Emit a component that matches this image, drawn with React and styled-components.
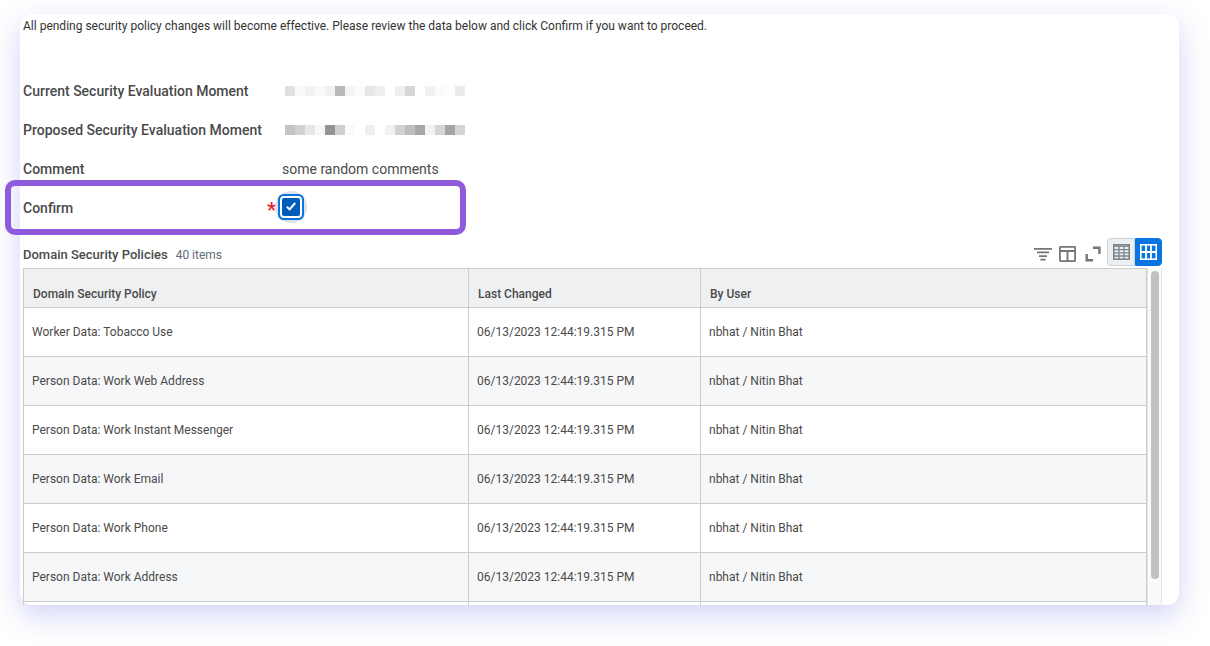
import React, { useState } from 'react';
import styled, { createGlobalStyle } from 'styled-components';

const GlobalStyle = createGlobalStyle`
	* {
		box-sizing: border-box;
	}

	body {
		margin: 0;
		background-color: #ffffff;
		color: #4a4a4a;
		font-family: Roboto, "Liberation Sans", sans-serif;
		font-size: 12px;
	}
`;

const Card = styled.main`
	margin: 14px 31px 41px 20px;
	padding: 0 17px 0 3px;
	border-radius: 12px;
	background-color: #ffffff;
	box-shadow: 0 10px 30px rgba(84, 88, 220, 0.27);
`;

const Intro = styled.p`
	margin: 0 0 33px;
	line-height: 24px;
	color: #333333;
`;

const FieldRow = styled.div`
	position: relative;
	display: flex;
	align-items: center;
	height: 39px;
	font-size: 14px;
`;

const FieldLabel = styled.label`
	display: flex;
	align-items: center;
	justify-content: space-between;
	width: 259px;
	padding-right: 6px;
	flex-shrink: 0;
	font-weight: 500;
	white-space: nowrap;
`;

const Required = styled.span`
	color: #e8232a;
	font-size: 20px;
	font-weight: 700;
	line-height: 20px;
	height: 16px;
`;

const Highlight = styled.div`
	position: absolute;
	top: -8px;
	left: -18px;
	width: 461px;
	height: 55px;
	border: 6px solid #8d5bdb;
	border-radius: 10px;
	pointer-events: none;
`;

const Redacted = styled.div`
	display: flex;
	margin-left: 3px;
`;

const RedactedCell = styled.span`
	width: 10px;
	height: 10px;
	background-color: ${({ $shade }) => $shade};
`;

const CheckHalo = styled.span`
	position: relative;
	display: flex;
	align-items: center;
	justify-content: center;
	width: 32px;
	height: 32px;
	margin: 0 0 2px -7px;
	border-radius: 50%;
	background-color: #dfe2e6;

	& svg {
		position: absolute;
		pointer-events: none;
	}
`;

const CheckInput = styled.input`
	appearance: none;
	width: 18px;
	height: 18px;
	margin: 0;
	border-radius: 2px;
	background-color: #ffffff;
	box-shadow: 0 0 0 2px #ffffff, 0 0 0 4px #0875e1;

	&:checked {
		background-color: #005cb9;
	}
`;

const Toolbar = styled.div`
	display: flex;
	align-items: flex-end;
	justify-content: space-between;
	height: 41px;
	padding-bottom: 2px;
`;

const TableTitle = styled.h2`
	margin: 0;
	font-size: 13px;
	font-weight: 500;
	line-height: 22px;

	& span {
		margin-left: 8px;
		font-size: 12px;
		font-weight: 400;
		color: #5e6a75;
	}
`;

const Tools = styled.div`
	display: flex;
	align-items: center;
`;

const IconButton = styled.button`
	display: flex;
	align-items: center;
	justify-content: center;
	width: 25px;
	height: 24px;
	margin-top: 4px;
	padding: 0;
	border: 0;
	background: none;
	color: #757575;
`;

const ViewToggle = styled.div`
	display: flex;
	margin-left: 2px;
`;

const ToggleButton = styled.button`
	display: flex;
	align-items: center;
	justify-content: center;
	width: ${({ $active }) => ($active ? '27px' : '28px')};
	height: 28px;
	padding: 0;
	border: 1px solid ${({ $active }) => ($active ? '#0875e1' : '#ced3d9')};
	background-color: ${({ $active }) => ($active ? '#0875e1' : '#eeeff1')};
	color: ${({ $active }) => ($active ? '#ffffff' : '#7b858f')};

	&:first-child {
		border-radius: 4px 0 0 4px;
	}

	&:last-child {
		border-radius: 0 4px 4px 0;
	}
`;

const TablePane = styled.div`
	display: flex;
	height: 337px;
	overflow: hidden;
`;

const PolicyTable = styled.table`
	flex: 1;
	height: max-content;
	border-collapse: separate;
	border-spacing: 0;
	border-top: 1px solid #cccccc;
	border-left: 1px solid #cccccc;
	table-layout: fixed;
`;

const HeadCell = styled.th`
	width: ${({ $width }) => $width};
	height: 39px;
	padding: 12px 9px 0;
	border-right: 1px solid #cccccc;
	border-bottom: 1px solid #cccccc;
	background-color: #eff0f2;
	font-weight: 500;
	text-align: left;
`;

const BodyRow = styled.tr`
	&:nth-child(even) {
		background-color: #f6f7f8;
	}
`;

const BodyCell = styled.td`
	height: 49px;
	padding: 0 8px;
	border-right: 1px solid #cccccc;
	border-bottom: 1px solid #cccccc;
`;

const ScrollTrack = styled.div`
	width: 15px;
	padding: 3px 0 0 3px;
	border-left: 1px solid #e4e4e4;
	border-right: 1px solid #e8e8e8;
	background-color: #fafafa;
`;

const ScrollThumb = styled.div`
	width: 8px;
	height: 308px;
	border-radius: 4px;
	background-color: #c1c1c1;
`;

const CURRENT_SHADES = [
	'#e0e0e0', '#fafafa', '#f2f2f2', '#f9f9f9', '#f1f1f1', '#bababa', '#f4f4f4', '#fbfbfb', '#e7e7e7',
	'#eeeeee', '#ffffff', '#eeeeee', '#d6d6d6', '#ffffff', '#f2f2f2', '#fbfbfb', '#fefefe', '#ebebeb',
];

const PROPOSED_SHADES = [
	'#c4c4c4', '#d1d1d1', '#e8e8e8', '#f7f7f7', '#949494', '#d0d0d0', '#fafafa', '#ffffff', '#f0f0f0',
	'#ffffff', '#f1f1f1', '#d2d2d2', '#bebebe', '#a7a7a7', '#f2f2f2', '#d5d5d5', '#a5a5a5', '#d5d5d5',
];

const POLICIES = [
	'Worker Data: Tobacco Use',
	'Person Data: Work Web Address',
	'Person Data: Work Instant Messenger',
	'Person Data: Work Email',
	'Person Data: Work Phone',
	'Person Data: Work Address',
].map((name) => ({
	name,
	changed: '06/13/2023 12:44:19.315 PM',
	user: 'nbhat / Nitin Bhat',
}));

function FilterIcon() {
	return (
		<svg width="18" height="14" viewBox="0 0 18 14" fill="currentColor">
			<path d="M0 1h18v1.7H0zM3 4.6h12v1.7H3zM5 8.3h8V10H5zM6.4 11.8h5.2v1.7H6.4z" />
		</svg>
	);
}

function ColumnsIcon() {
	return (
		<svg width="17" height="16" viewBox="0 0 17 16" fill="none" stroke="currentColor">
			<rect x="0.9" y="0.9" width="15.2" height="14.2" rx="0.5" strokeWidth="1.8" />
			<path d="M1 5h15M8.5 5v10" strokeWidth="1.9" />
		</svg>
	);
}

function ExpandIcon() {
	return (
		<svg width="16" height="16" viewBox="0 0 16 16" fill="none" stroke="currentColor" strokeWidth="2.4">
			<path d="M8 1.7h6.4V8M1.7 8v6.3H8" />
		</svg>
	);
}

function GridIcon() {
	return (
		<svg width="17" height="16" viewBox="0 0 17 16" fill="none" stroke="currentColor">
			<rect x="0.8" y="0.8" width="15.4" height="14.4" strokeWidth="1.6" />
			<path d="M1 2.2h15" strokeWidth="1.4" />
			<path d="M1 5.6h15M1 8.8h15M1 12h15M6 2v13M11 2v13" strokeWidth="1.3" />
		</svg>
	);
}

function CompactGridIcon() {
	return (
		<svg width="17" height="16" viewBox="0 0 17 16" fill="none" stroke="currentColor">
			<rect x="0.8" y="0.8" width="15.4" height="14.4" strokeWidth="1.6" />
			<path d="M1 8h15M6 1v14M11 1v14" strokeWidth="1.8" />
		</svg>
	);
}

function RedactedValue({ shades }) {
	return (
		<Redacted>
			{shades.map((shade, i) => <RedactedCell key={i} $shade={shade} />)}
		</Redacted>
	);
}

export default function App() {
	const [confirmed, setConfirmed] = useState(true);
	const [view, setView] = useState('compact');

	return (
		<>
			<GlobalStyle />
			<Card>
				<Intro>
					All pending security policy changes will become effective. Please review the data below and click Confirm if you want to proceed.
				</Intro>
				<FieldRow>
					<FieldLabel as="div">Current Security Evaluation Moment</FieldLabel>
					<RedactedValue shades={CURRENT_SHADES} />
				</FieldRow>
				<FieldRow>
					<FieldLabel as="div">Proposed Security Evaluation Moment</FieldLabel>
					<RedactedValue shades={PROPOSED_SHADES} />
				</FieldRow>
				<FieldRow>
					<FieldLabel as="div">Comment</FieldLabel>
					<div>some random comments</div>
				</FieldRow>
				<FieldRow>
					<FieldLabel htmlFor="confirm">
						Confirm
						<Required>*</Required>
					</FieldLabel>
					<CheckHalo>
						<CheckInput
							id="confirm"
							type="checkbox"
							checked={confirmed}
							onChange={(e) => setConfirmed(e.target.checked)}
						/>
						<svg width="10" height="9" viewBox="0 0 10 9" fill="none" stroke="#ffffff" strokeWidth="2">
							<path d="M0.8 4.8L3.6 7.4L9.2 1" />
						</svg>
					</CheckHalo>
					<Highlight />
				</FieldRow>
				<Toolbar>
					<TableTitle>
						Domain Security Policies
						<span>40 items</span>
					</TableTitle>
					<Tools>
						<IconButton type="button" aria-label="Filter"><FilterIcon /></IconButton>
						<IconButton type="button" aria-label="Columns"><ColumnsIcon /></IconButton>
						<IconButton type="button" aria-label="Expand"><ExpandIcon /></IconButton>
						<ViewToggle>
							<ToggleButton
								type="button"
								aria-label="Grid view"
								$active={view === 'grid'}
								onClick={() => setView('grid')}
							>
								<GridIcon />
							</ToggleButton>
							<ToggleButton
								type="button"
								aria-label="Compact view"
								$active={view === 'compact'}
								onClick={() => setView('compact')}
							>
								<CompactGridIcon />
							</ToggleButton>
						</ViewToggle>
					</Tools>
				</Toolbar>
				<TablePane>
					<PolicyTable>
						<thead>
							<tr>
								<HeadCell $width="445px">Domain Security Policy</HeadCell>
								<HeadCell $width="232px">Last Changed</HeadCell>
								<HeadCell>By User</HeadCell>
							</tr>
						</thead>
						<tbody>
							{POLICIES.map(({ name, changed, user }) => (
								<BodyRow key={name}>
									<BodyCell>{name}</BodyCell>
									<BodyCell>{changed}</BodyCell>
									<BodyCell>{user}</BodyCell>
								</BodyRow>
							))}
							<BodyRow>
								<BodyCell />
								<BodyCell />
								<BodyCell />
							</BodyRow>
						</tbody>
					</PolicyTable>
					<ScrollTrack>
						<ScrollThumb />
					</ScrollTrack>
				</TablePane>
			</Card>
		</>
	);
}
